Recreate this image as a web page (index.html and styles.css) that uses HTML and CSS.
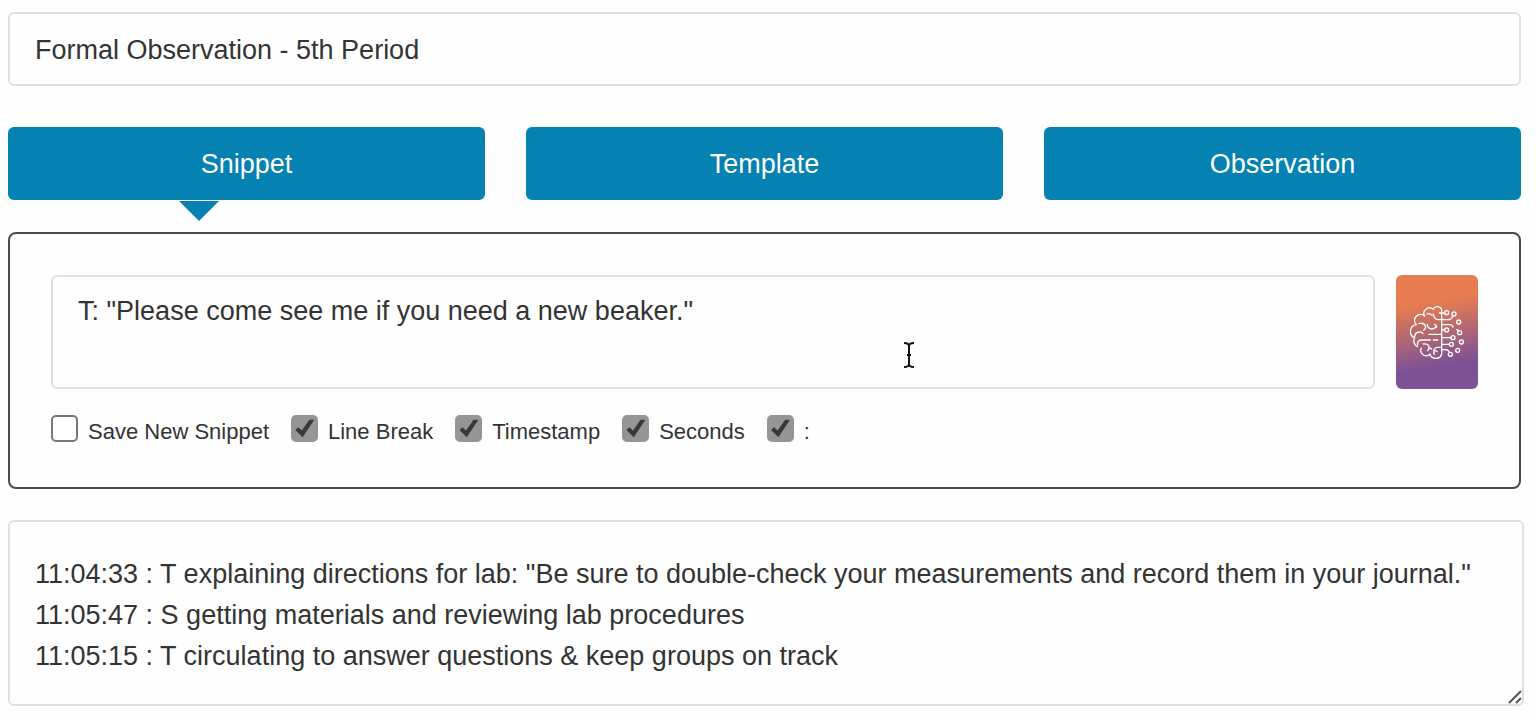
FILE: index.html
```
<!DOCTYPE html>
<html lang="en">
<head>
    <meta charset="UTF-8">
    <meta name="viewport" content="width=device-width, initial-scale=1.0">
    <title>Formal Observation - 5th Period</title>
    <link rel="stylesheet" href="styles.css">
</head>
<body>
    <main>
        <input type="text" class="field title" aria-label="Observation title" value="Formal Observation - 5th Period">

        <div class="tabs">
            <button type="button" class="tab active">Snippet</button>
            <button type="button" class="tab">Template</button>
            <button type="button" class="tab">Observation</button>
        </div>

        <section class="panel">
            <div class="entry">
                <textarea class="field snippet" aria-label="Snippet">T: "Please come see me if you need a new beaker."</textarea>
                <button type="button" class="ai-button" aria-label="AI assist">
                    <svg viewBox="90 130 165 171" width="55" height="57">
                        <!-- brain half -->
                        <path d="M185 150A13 13 0 0 0 160 146A17 16 0 0 0 134 166A17 17 0 0 0 109 192A21 21 0 0 0 104 232A18 18 0 0 0 113 258M124 262A16 16 0 0 0 150 280A18 17 0 0 0 185 280V150"/>
                        <path d="M141 160q8-3 15 4M160 160q2 16 15 17h10M116 189q14-4 20 5 3 9-5 15M142 191q1 13 14 14 10-1 13-9M163 191q7 2 7 9M104 228q1-14 16-14 6 0 9 5M146 221h38M113 252q-2-14 13-14h25M160 238h13M130 250q14-2 17 8 1 7-4 12M147 262q5 0 8 3M163 281q-6-19 9-21h13M163 270q5-1 8 3"/>
                        <!-- circuit half -->
                        <path d="M178 157h16M185 177h18q12 0 15-11M185 192h25q7 0 9 7M185 208h9M185 231h28M185 251h23M185 267h12q9 1 11 8M230 207q4 1 6 4"/>
                        <circle cx="200" cy="156" r="6"/>
                        <circle cx="222" cy="160" r="6"/>
                        <circle cx="236" cy="184" r="6"/>
                        <circle cx="200" cy="208" r="6"/>
                        <circle cx="239" cy="216" r="6"/>
                        <circle cx="219" cy="231" r="6"/>
                        <circle cx="244" cy="244" r="6"/>
                        <circle cx="214" cy="251" r="6"/>
                        <circle cx="233" cy="269" r="6"/>
                        <circle cx="211" cy="281" r="6"/>
                    </svg>
                </button>
                <svg class="cursor" viewBox="0 0 14 28" width="14" height="28">
                    <path d="M2 2q5 0 5 3q0-3 5-3M7 5v18M2 26q5 0 5-3q0 3 5 3M5 14h4"/>
                </svg>
            </div>

            <div class="options">
                <label><input type="checkbox">Save New Snippet</label>
                <label><input type="checkbox" checked>Line Break</label>
                <label><input type="checkbox" checked>Timestamp</label>
                <label><input type="checkbox" checked>Seconds</label>
                <label><input type="checkbox" checked>:</label>
            </div>
        </section>

        <div class="log">
            <textarea class="field notes" aria-label="Notes">11:04:33 : T explaining directions for lab: "Be sure to double-check your measurements and record them in your journal."
11:05:47 : S getting materials and reviewing lab procedures
11:05:15 : T circulating to answer questions &amp; keep groups on track</textarea>
            <svg class="grip" viewBox="0 0 14 14" width="14" height="14">
                <path d="M1 13L13 1M8 13l5-5"/>
            </svg>
        </div>
    </main>
</body>
</html>
```
FILE: styles.css
```
* {
    box-sizing: border-box;
}
body {
    margin: 0;
    padding: 12px 15px 12px 8px;
    background-color: #fefefe;
    color: #333;
    font-family: "Liberation Sans", Arial, sans-serif;
    font-size: 27px;
}
button, input, textarea {
    font: inherit;
    color: inherit;
}
.field {
    display: block;
    width: 100%;
    border: 2px solid #e0e0e0;
    border-radius: 6px;
    background-color: #fefefe;
    outline: none;
}
.title {
    height: 74px;
    padding: 2px 25px 0;
}
.tabs {
    display: grid;
    grid-template-columns: repeat(3, 1fr);
    gap: 41px;
    margin: 41px 0 32px;
}
.tab {
    position: relative;
    height: 73px;
    padding: 2px 0 0;
    border: none;
    border-radius: 6px;
    background-color: #0581b2;
    color: #fff;
    cursor: pointer;
}
.tab.active::after {
    content: "";
    position: absolute;
    top: 100%;
    left: 40%;
    margin-top: 1px;
    transform: translateX(-50%);
    border: 20px solid transparent;
    border-top-color: #0581b2;
    border-bottom: none;
}
.panel {
    padding: 41px 41px 39px;
    border: 2px solid #4a4a4e;
    border-radius: 8px;
}
.entry {
    position: relative;
    display: flex;
    gap: 21px;
}
.snippet {
    flex: 1;
    height: 114px;
    padding: 14px 25px;
    line-height: 41px;
    resize: none;
}
.ai-button {
    display: flex;
    align-items: center;
    justify-content: center;
    width: 82px;
    padding: 0;
    border: none;
    border-radius: 6px;
    background: linear-gradient(170deg, #e67c50 26%, #7c5295 77%);
    cursor: pointer;
}
.ai-button svg {
    fill: none;
    stroke: #fff;
    stroke-width: 4;
    stroke-linecap: round;
    stroke-linejoin: round;
}
.cursor {
    position: absolute;
    top: 66px;
    left: calc(60% - 5px);
    fill: none;
    stroke: #111;
    stroke-width: 2;
    pointer-events: none;
}
.options {
    display: flex;
    flex-wrap: wrap;
    gap: 22px;
    margin-top: 26px;
    font-size: 22px;
    line-height: 32px;
}
.options label {
    display: flex;
    align-items: center;
    gap: 10px;
}
.options input {
    appearance: none;
    width: 27px;
    height: 27px;
    margin: 0 0 6px;
    border: 2px solid #777;
    border-radius: 5px;
    background-color: #fff;
}
.options input:checked {
    border: none;
    background-color: #959595;
}
.options input:checked::after {
    content: "";
    display: block;
    height: 100%;
    background-color: #383838;
    clip-path: polygon(16% 56%, 27% 45%, 40% 57%, 68% 18%, 86% 18%, 43% 82%);
}
.log {
    position: relative;
    margin: 31px -3px 0 0;
}
.notes {
    height: 186px;
    padding: 32px 25px;
    line-height: 41px;
    resize: vertical;
}
.notes::-webkit-resizer {
    background: transparent;
}
.grip {
    position: absolute;
    right: 2px;
    bottom: 2px;
    fill: none;
    stroke: #555;
    stroke-width: 2;
    pointer-events: none;
}
```
